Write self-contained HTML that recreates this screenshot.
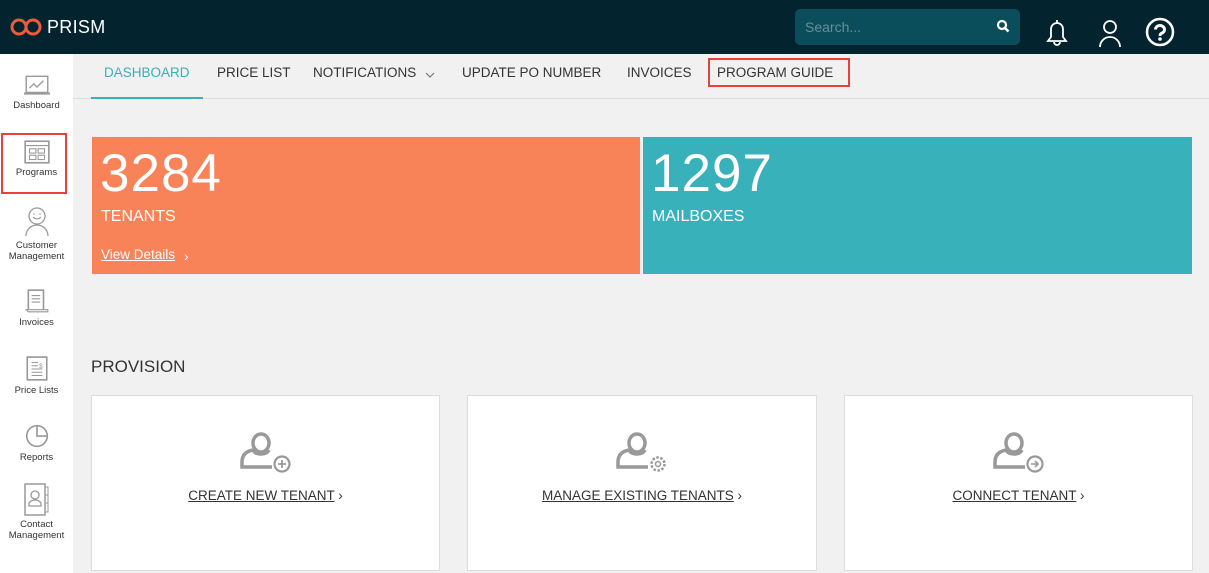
<!DOCTYPE html>
<html><head><meta charset="utf-8"><style>
*{box-sizing:border-box;margin:0;padding:0}
body{width:1209px;height:573px;overflow:hidden;font-family:"Liberation Sans",sans-serif;background:#f1f1f1;position:relative}
.hdr{position:absolute;left:0;top:0;width:1209px;height:54px;background:#03232e}
.logo{position:absolute;left:10px;top:17px}
.brand{position:absolute;left:47px;top:17px;color:#fff;font-size:18px;letter-spacing:.3px;font-weight:300}
.search{position:absolute;left:795px;top:9px;width:225px;height:36px;background:#0a4e5c;border-radius:5px}
.search span{position:absolute;left:10px;top:10px;color:#6b8d95;font-size:14px}
.side{position:absolute;left:0;top:54px;width:73px;height:519px;background:#fff}
.si{position:absolute;left:0;width:73px;text-align:center;font-size:9.5px;color:#333;line-height:11px}
.si svg{display:block;margin:0 auto 3px}
.nav{position:absolute;left:73px;top:54px;width:1136px;height:45px;border-bottom:1px solid #ddd}
.nav span{position:absolute;top:11px;font-size:13.5px;color:#333}
.tile{position:absolute;top:137px;height:137px;color:#fff}
.num{position:absolute;left:8px;top:6px;font-size:53px;font-weight:300;letter-spacing:1px}
.lbl{position:absolute;left:9px;top:71px;font-size:16px}
.card{position:absolute;top:395px;height:176px;background:#fff;border:1px solid #ddd}
.card svg{position:absolute;top:33px}
.card a{position:absolute;top:92px;width:100%;text-align:center;font-size:13.5px;color:#333;text-decoration:none}
.card a u{text-decoration:underline}
</style></head><body>
<div class="hdr">
<svg class="logo" width="32" height="20" viewBox="0 0 32 20"><circle cx="9" cy="10" r="7" fill="none" stroke="#f05a3a" stroke-width="3"/><circle cx="23" cy="10" r="7" fill="none" stroke="#f05a3a" stroke-width="3"/></svg>
<div class="brand">PRISM</div>
<div class="search"><span>Search...</span>
<svg style="position:absolute;left:201px;top:10px" width="14" height="14" viewBox="0 0 14 14"><circle cx="6" cy="6" r="4" fill="none" stroke="#fff" stroke-width="2.2"/><path d="M9 9l3.5 3.5" stroke="#fff" stroke-width="2.5"/></svg></div>
<svg style="position:absolute;left:1043px;top:17px" width="28" height="30" viewBox="0 0 28 30"><path d="M5 24h18l-3-4V12a6 6 0 0 0-12 0v8z" fill="none" stroke="#fff" stroke-width="1.8"/><path d="M11 25a3 3 0 0 0 6 0" fill="none" stroke="#fff" stroke-width="1.8"/><path d="M14 3v3" stroke="#fff" stroke-width="1.8"/></svg>
<svg style="position:absolute;left:1097px;top:18px" width="26" height="30" viewBox="0 0 26 30"><circle cx="13" cy="9" r="6" fill="none" stroke="#fff" stroke-width="1.8"/><path d="M3 29a10 10 0 0 1 20 0" fill="none" stroke="#fff" stroke-width="1.8"/></svg>
<svg style="position:absolute;left:1145px;top:17px" width="32" height="32" viewBox="0 0 32 32"><circle cx="15" cy="15" r="13" fill="none" stroke="#fff" stroke-width="2.5"/><path d="M10.5 12.5a4.5 4 0 1 1 6 3.8c-1.3.6-1.5 1.2-1.5 2.7" fill="none" stroke="#fff" stroke-width="3"/><circle cx="15" cy="22" r="1.8" fill="#fff"/></svg>
</div>
<div class="side">
<div class="si" style="top:21px"><svg width="28" height="22" viewBox="0 0 26 20"><rect x="3" y="1" width="20" height="15" fill="none" stroke="#999" stroke-width="1.3"/><path d="M1 17h24" stroke="#999" stroke-width="2"/><path d="M6 12l4-4 3 3 6-6" fill="none" stroke="#999" stroke-width="1.2"/></svg>Dashboard</div>
<div class="si" style="top:86px"><svg width="28" height="24" viewBox="0 0 26 22"><rect x="2" y="1" width="22" height="20" fill="none" stroke="#999" stroke-width="1.5"/><path d="M2 5h22" stroke="#999"/><rect x="6" y="8" width="6" height="4" fill="none" stroke="#999"/><rect x="14" y="8" width="6" height="4" fill="none" stroke="#999"/><rect x="6" y="14" width="6" height="4" fill="none" stroke="#999"/><rect x="14" y="14" width="6" height="4" fill="none" stroke="#999"/></svg>Programs</div>
<div style="position:absolute;left:1px;top:79px;width:66px;height:61px;border:2px solid #e8403c"></div>
<div class="si" style="top:151px"><svg width="26" height="32" viewBox="0 0 26 30"><circle cx="13" cy="10" r="8" fill="none" stroke="#999" stroke-width="1.3"/><path d="M9 11q4 4 8 0" fill="none" stroke="#999"/><circle cx="10" cy="8" r=".8" fill="#999"/><circle cx="16" cy="8" r=".8" fill="#999"/><path d="M2 30a11 11 0 0 1 22 0" fill="none" stroke="#999" stroke-width="1.3"/></svg>Customer<br>Management</div>
<div class="si" style="top:234px"><svg width="24" height="26" viewBox="0 0 22 24"><path d="M3 20V2h14v18" fill="none" stroke="#999" stroke-width="1.5"/><path d="M6 7h8M6 10h8M6 13h8" stroke="#999"/><path d="M1 20h20v2H3z" fill="none" stroke="#999"/></svg>Invoices</div>
<div class="si" style="top:302px"><svg width="24" height="26" viewBox="0 0 22 24"><rect x="2" y="1" width="18" height="21" fill="none" stroke="#999" stroke-width="1.5"/><path d="M6 6h6M6 9h6M6 12h10M6 15h10M6 18h10" stroke="#999"/><text x="13" y="11" font-size="6" fill="#999">$</text></svg>Price Lists</div>
<div class="si" style="top:369px"><svg width="26" height="26" viewBox="0 0 24 24"><circle cx="12" cy="12" r="9.5" fill="none" stroke="#999" stroke-width="1.5"/><path d="M12 2.5V12h9.5" fill="none" stroke="#999" stroke-width="1.5"/></svg>Reports</div>
<div class="si" style="top:429px"><svg width="28" height="33" viewBox="0 0 28 33"><rect x="2" y="1" width="20" height="31" fill="none" stroke="#999" stroke-width="1.5"/><path d="M22 4h3v25h-3M22 12h3M22 20h3" fill="none" stroke="#999"/><circle cx="12" cy="12" r="4" fill="none" stroke="#999" stroke-width="1.3"/><path d="M6 23v-2a6 4 0 0 1 12 0v2z" fill="none" stroke="#999" stroke-width="1.3"/></svg>Contact<br>Management</div>
</div>
<div class="nav">
<span style="left:31px;color:#3aafb9">DASHBOARD</span>
<div style="position:absolute;left:18px;top:43px;width:112px;height:2px;background:#3aafb9"></div>
<span style="left:144px">PRICE LIST</span>
<span style="left:240px">NOTIFICATIONS</span>
<svg style="position:absolute;left:352px;top:17px" width="10" height="8" viewBox="0 0 10 8"><path d="M1 2l4 4 4-4" fill="none" stroke="#777" stroke-width="1.2"/></svg>
<span style="left:389px">UPDATE PO NUMBER</span>
<span style="left:554px">INVOICES</span>
<span style="left:644px">PROGRAM GUIDE</span>
<div style="position:absolute;left:635px;top:4px;width:142px;height:29px;border:2px solid #e8403c"></div>
</div>
<div class="tile" style="left:92px;width:548px;background:#f98358"><div class="num">3284</div><div class="lbl">TENANTS</div><div style="position:absolute;left:9px;top:110px;font-size:13.5px;text-decoration:underline">View Details</div><div style="position:absolute;left:92px;top:111px;font-size:14px">&#8250;</div></div>
<div class="tile" style="left:643px;width:549px;background:#38b1bb"><div class="num">1297</div><div class="lbl">MAILBOXES</div></div>
<div style="position:absolute;left:91px;top:357px;font-size:17px;color:#333">PROVISION</div>
<div class="card" style="left:91px;width:349px"><svg style="left:146px" width="54" height="44" viewBox="0 0 54 44"><path d="M15 14a8 9 0 1 1 16 0 8 9 0 1 1-16 0zM31 21q-2 4-8 4t-8-4Q4 23 4 33v5h30" fill="none" stroke="#999" stroke-width="3.5"/><circle cx="44" cy="35" r="7.5" fill="#fff" stroke="#999" stroke-width="2.2"/><path d="M44 31v8M40 35h8" stroke="#999" stroke-width="1.8"/></svg><a><u>CREATE NEW TENANT</u> &#8250;</a></div>
<div class="card" style="left:467px;width:350px"><svg style="left:146px" width="54" height="44" viewBox="0 0 54 44"><path d="M15 14a8 9 0 1 1 16 0 8 9 0 1 1-16 0zM31 21q-2 4-8 4t-8-4Q4 23 4 33v5h30" fill="none" stroke="#999" stroke-width="3.5"/><circle cx="44" cy="35" r="6.5" fill="#fff" stroke="#999" stroke-width="2.5" stroke-dasharray="2.5 1.6"/><circle cx="44" cy="35" r="2.5" fill="none" stroke="#999" stroke-width="1.5"/></svg><a><u>MANAGE EXISTING TENANTS</u> &#8250;</a></div>
<div class="card" style="left:844px;width:349px"><svg style="left:146px" width="54" height="44" viewBox="0 0 54 44"><path d="M15 14a8 9 0 1 1 16 0 8 9 0 1 1-16 0zM31 21q-2 4-8 4t-8-4Q4 23 4 33v5h30" fill="none" stroke="#999" stroke-width="3.5"/><circle cx="44" cy="35" r="7.5" fill="#fff" stroke="#999" stroke-width="2.2"/><path d="M40 35h7M44 32l3 3-3 3" fill="none" stroke="#999" stroke-width="1.6"/></svg><a><u>CONNECT TENANT</u> &#8250;</a></div>
</body></html>
